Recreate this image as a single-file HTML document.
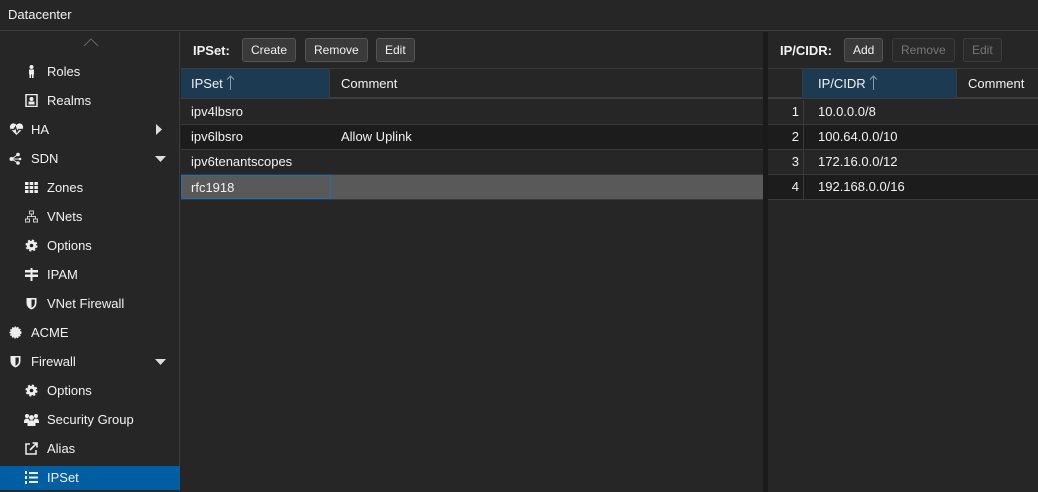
<!DOCTYPE html>
<html><head><style>
*{box-sizing:border-box;margin:0;padding:0}
body{width:1038px;height:492px;background:#262626;font-family:"Liberation Sans",sans-serif;font-size:13px;color:#f2f2f2;position:relative;overflow:hidden}
.abs{position:absolute}
.top{left:0;top:0;width:1038px;height:31px;background:#262626;border-bottom:1px solid #3c3c3c}
.top span{position:absolute;left:8px;top:7px}
.side{left:0;top:32px;width:180px;height:460px;background:#262626;border-right:1px solid #3a3a3a}
.it{position:absolute;left:0;width:180px;height:25px;line-height:25px}
.it .ic{position:absolute;top:6px;width:13px;height:13px}
.it .t{position:absolute}
.sel{background:#005fa3}
.btn{position:absolute;top:38px;height:24px;line-height:22px;border:1px solid #555;border-radius:3px;background:#3a3a3a;padding:0 8px;font-size:12px}
.dis{color:#777;background:#2a2a2a;border-color:#3c3c3c}
.hdr{position:absolute;top:68px;height:31px;background:#262626;border-top:1px solid #3a3a3a;border-bottom:2px solid #3e3e3e}
.row{position:absolute;height:25px;line-height:24px;border-bottom:1px solid #3a3a3a}
.arr{display:inline-block;vertical-align:-2px;margin-left:3px}
</style></head><body>
<div class="abs top"><span>Datacenter</span></div>
<div class="abs side">
<svg class="abs" style="left:83px;top:6px" width="16" height="9"><path d="M1 8 L8 1 L15 8" stroke="#666" fill="none"/></svg>
</div>
<div class="it" style="top:59px"><svg class="ic" style="left:25px" viewBox="0 0 13 13"><circle cx="6.5" cy="2" r="2" fill="#eee"/><rect x="4" y="4.5" width="5" height="5" fill="#eee"/><rect x="4.5" y="9" width="1.6" height="4" fill="#eee"/><rect x="7" y="9" width="1.6" height="4" fill="#eee"/></svg><span class="t" style="left:47px">Roles</span></div>
<div class="it" style="top:88px"><svg class="ic" style="left:25px" viewBox="0 0 13 13"><rect x="1" y="0.5" width="11" height="12" fill="none" stroke="#eee" stroke-width="1.5"/><circle cx="6.5" cy="5" r="2" fill="#eee"/><rect x="3.5" y="7.5" width="6" height="3" fill="#eee"/></svg><span class="t" style="left:47px">Realms</span></div>
<div class="it" style="top:117px"><svg class="ic" style="left:9px;width:15px" viewBox="0 0 15 13"><path d="M7.5 12 L1.5 6 A3.2 3.2 0 0 1 7.5 2 A3.2 3.2 0 0 1 13.5 6 Z" fill="#eee"/><path d="M2 6.5 H5 L6.5 4 L8 9 L9.5 6.5 H13" stroke="#262626" stroke-width="1.3" fill="none"/></svg><span class="t" style="left:31px">HA</span><svg class="abs" style="left:156px;top:7px" width="6" height="11"><path d="M0 0 L6 5.5 L0 11Z" fill="#ddd"/></svg></div>
<div class="it" style="top:146px"><svg class="ic" style="left:9px" viewBox="0 0 13 13"><circle cx="2.5" cy="7" r="2" fill="#eee"/><circle cx="9" cy="2.5" r="1.8" fill="#eee"/><circle cx="9" cy="11" r="1.8" fill="#eee"/><circle cx="11" cy="7" r="1.3" fill="#eee"/><path d="M2.5 7 L9 2.5 M2.5 7 L9 11 M2.5 7 H11" stroke="#eee"/></svg><span class="t" style="left:31px">SDN</span><svg class="abs" style="left:155px;top:10px" width="11" height="6"><path d="M0 0 H11 L5.5 6Z" fill="#ddd"/></svg></div>
<div class="it" style="top:175px"><svg class="ic" style="left:25px" viewBox="0 0 13 13"><g fill="#eee"><rect x="0" y="1" width="3.5" height="3"/><rect x="4.7" y="1" width="3.5" height="3"/><rect x="9.4" y="1" width="3.5" height="3"/><rect x="0" y="5" width="3.5" height="3"/><rect x="4.7" y="5" width="3.5" height="3"/><rect x="9.4" y="5" width="3.5" height="3"/><rect x="0" y="9" width="3.5" height="3"/><rect x="4.7" y="9" width="3.5" height="3"/><rect x="9.4" y="9" width="3.5" height="3"/></g></svg><span class="t" style="left:47px">Zones</span></div>
<div class="it" style="top:204px"><svg class="ic" style="left:25px" viewBox="0 0 13 13"><g fill="none" stroke="#ccc"><rect x="4.5" y="1" width="4" height="3"/><rect x="0.5" y="9" width="4" height="3"/><rect x="8.5" y="9" width="4" height="3"/><path d="M6.5 4 V6.5 H2.5 V9 M6.5 6.5 H10.5 V9"/></g></svg><span class="t" style="left:47px">VNets</span></div>
<div class="it" style="top:233px"><svg class="ic" style="left:25px" viewBox="0 0 13 13"><circle cx="6.5" cy="6.5" r="4.8" fill="#eee" stroke="#eee" stroke-width="2.5" stroke-dasharray="2 1.8"/><circle cx="6.5" cy="6.5" r="1.8" fill="#262626"/></svg><span class="t" style="left:47px">Options</span></div>
<div class="it" style="top:262px"><svg class="ic" style="left:25px" viewBox="0 0 13 13"><g fill="#eee"><rect x="0" y="2" width="13" height="2.5"/><rect x="0" y="6.5" width="13" height="2.5"/><rect x="5.5" y="0" width="2" height="13"/></g></svg><span class="t" style="left:47px">IPAM</span></div>
<div class="it" style="top:291px"><svg class="ic" style="left:26px;width:11px" viewBox="0 0 11 13"><path d="M0.5 1 H10.5 V6 Q10.5 10.5 5.5 12.5 Q0.5 10.5 0.5 6Z" fill="#eee"/><path d="M5.5 2.5 H8.8 V6 Q8.8 9 5.5 10.8Z" fill="#262626"/></svg><span class="t" style="left:47px">VNet Firewall</span></div>
<div class="it" style="top:320px"><svg class="ic" style="left:9px" viewBox="0 0 13 13"><circle cx="6.5" cy="6.5" r="5.2" fill="#eee" stroke="#eee" stroke-width="1.6" stroke-dasharray="1.4 1.2"/></svg><span class="t" style="left:31px">ACME</span></div>
<div class="it" style="top:349px"><svg class="ic" style="left:10px;width:11px" viewBox="0 0 11 13"><path d="M0.5 1 H10.5 V6 Q10.5 10.5 5.5 12.5 Q0.5 10.5 0.5 6Z" fill="#eee"/><path d="M5.5 2.5 H8.8 V6 Q8.8 9 5.5 10.8Z" fill="#262626"/></svg><span class="t" style="left:31px">Firewall</span><svg class="abs" style="left:155px;top:10px" width="11" height="6"><path d="M0 0 H11 L5.5 6Z" fill="#ddd"/></svg></div>
<div class="it" style="top:378px"><svg class="ic" style="left:25px" viewBox="0 0 13 13"><circle cx="6.5" cy="6.5" r="4.8" fill="#eee" stroke="#eee" stroke-width="2.5" stroke-dasharray="2 1.8"/><circle cx="6.5" cy="6.5" r="1.8" fill="#262626"/></svg><span class="t" style="left:47px">Options</span></div>
<div class="it" style="top:407px"><svg class="ic" style="left:24px;width:15px" viewBox="0 0 15 13"><g fill="#eee"><circle cx="3" cy="3" r="2"/><circle cx="12" cy="3" r="2"/><circle cx="7.5" cy="4.5" r="2.4"/><path d="M0 9 Q0 5.5 3 5.5 Q5 5.5 5 7 V10 H0Z"/><path d="M15 9 Q15 5.5 12 5.5 Q10 5.5 10 7 V10 H15Z"/><path d="M3.5 13 V10 Q3.5 7.3 7.5 7.3 Q11.5 7.3 11.5 10 V13Z"/></g></svg><span class="t" style="left:47px">Security Group</span></div>
<div class="it" style="top:436px"><svg class="ic" style="left:25px" viewBox="0 0 13 13"><path d="M5 2 H1 V12 H11 V8" fill="none" stroke="#eee" stroke-width="1.5"/><path d="M5 8 L11.5 1.5 M7.5 1 H12 V5.5" fill="none" stroke="#eee" stroke-width="1.6"/></svg><span class="t" style="left:47px">Alias</span></div>
<div class="it sel" style="top:466px;height:24px;line-height:23px"><svg class="ic" style="left:25px;top:5px" viewBox="0 0 13 13"><g fill="#eee"><rect x="0" y="0" width="2" height="3"/><rect x="0" y="5" width="2" height="3"/><rect x="0" y="10" width="2" height="3"/><rect x="4" y="1" width="9" height="2"/><rect x="4" y="5.5" width="9" height="2"/><rect x="4" y="10" width="9" height="2"/></g></svg><span class="t" style="left:47px">IPSet</span></div>

<div class="abs" style="left:181px;top:32px;width:582px;height:460px;background:#262626"></div>
<span class="abs" style="left:193px;top:43px;font-weight:bold">IPSet:</span>
<div class="btn" style="left:242px">Create</div>
<div class="btn" style="left:305px">Remove</div>
<div class="btn" style="left:376px">Edit</div>
<div class="hdr" style="left:181px;width:582px"></div>
<div class="abs" style="left:181px;top:69px;width:149px;height:29px;background:#1c3a52;border-right:1px solid #3a3a3a;line-height:29px;padding-left:10px">IPSet<svg class="arr" width="9" height="15"><path d="M4.5 1 V15 M1 4.5 L4.5 1 L8 4.5" stroke="#8a9aa6" fill="none"/></svg></div>
<div class="abs" style="left:341px;top:69px;line-height:29px">Comment</div>
<div class="row" style="left:181px;top:100px;width:582px;background:#262626"><span style="margin-left:10px">ipv4lbsro</span></div>
<div class="row" style="left:181px;top:125px;width:582px;background:#1c1c1c"><span style="margin-left:10px">ipv6lbsro</span><span class="abs" style="left:160px">Allow Uplink</span></div>
<div class="row" style="left:181px;top:150px;width:582px;background:#262626"><span style="margin-left:10px">ipv6tenantscopes</span></div>
<div class="row" style="left:181px;top:175px;width:582px;background:#595959"><div class="abs" style="left:0;top:0;width:150px;height:24px;border:1px solid #1e6fb0;padding-left:9px">rfc1918</div></div>

<div class="abs" style="left:763px;top:32px;width:5px;height:460px;background:#1a1a1a"></div>

<span class="abs" style="left:780px;top:43px;font-weight:bold">IP/CIDR:</span>
<div class="btn" style="left:844px">Add</div>
<div class="btn dis" style="left:892px">Remove</div>
<div class="btn dis" style="left:963px">Edit</div>
<div class="hdr" style="left:768px;width:270px"></div>
<div class="abs" style="left:768px;top:69px;width:35px;height:29px;border-right:1px solid #3a3a3a"></div>
<div class="abs" style="left:803px;top:69px;width:154px;height:29px;background:#1c3a52;border-right:1px solid #3a3a3a;line-height:29px;padding-left:15px">IP/CIDR<svg class="arr" width="9" height="15"><path d="M4.5 1 V15 M1 4.5 L4.5 1 L8 4.5" stroke="#8a9aa6" fill="none"/></svg></div>
<div class="abs" style="left:968px;top:69px;line-height:29px">Comment</div>
<div class="row" style="left:768px;top:100px;width:270px;background:#262626"><span class="abs" style="left:0;width:31px;text-align:right">1</span><span class="abs" style="left:35px;top:0;height:24px;border-left:1px solid #3a3a3a;padding-left:14px">10.0.0.0/8</span></div>
<div class="row" style="left:768px;top:125px;width:270px;background:#1c1c1c"><span class="abs" style="left:0;width:31px;text-align:right">2</span><span class="abs" style="left:35px;top:0;height:24px;border-left:1px solid #3a3a3a;padding-left:14px">100.64.0.0/10</span></div>
<div class="row" style="left:768px;top:150px;width:270px;background:#262626"><span class="abs" style="left:0;width:31px;text-align:right">3</span><span class="abs" style="left:35px;top:0;height:24px;border-left:1px solid #3a3a3a;padding-left:14px">172.16.0.0/12</span></div>
<div class="row" style="left:768px;top:175px;width:270px;background:#1c1c1c"><span class="abs" style="left:0;width:31px;text-align:right">4</span><span class="abs" style="left:35px;top:0;height:24px;border-left:1px solid #3a3a3a;padding-left:14px">192.168.0.0/16</span></div>
</body></html>
